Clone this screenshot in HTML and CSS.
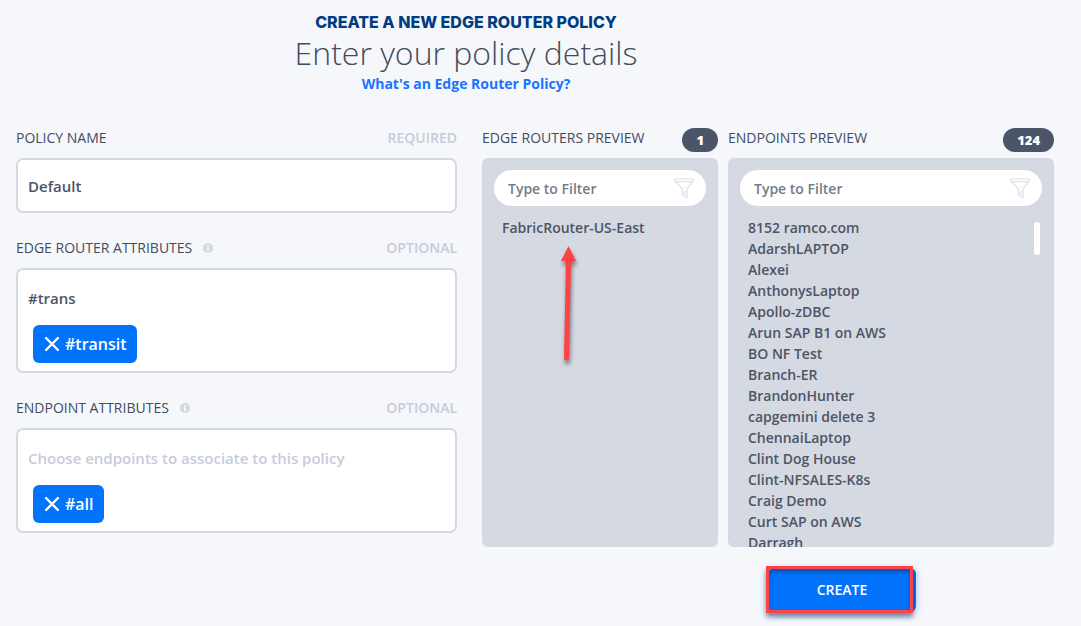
FILE: index.html
```html
<!DOCTYPE html>
<html lang="en">
<head>
<meta charset="utf-8">
<meta name="viewport" content="width=device-width, initial-scale=1">
<title>Create a new edge router policy</title>
<link rel="stylesheet" href="styles.css">
</head>
<body>
<svg class="symbols" aria-hidden="true">
  <symbol id="info" viewBox="0 0 10 10"><circle cx="5" cy="5" r="5" fill="#d3d8e1"/><path d="M4 2h2v1.400H4zM4 4.200H6V8H4z" fill="#f6f7fb"/></symbol>
  <symbol id="cross" viewBox="0 0 14 14"><path d="M1 1l12 12M13 1L1 13" fill="none" stroke="#fff" stroke-width="2.400" stroke-linecap="round"/></symbol>
  <symbol id="funnel" viewBox="0 0 20 21"><path d="M1 1h18v2.500l-6 7V20l-4.500-3v-6.500L1 3.500zM1 3.800h18M11 13v4" fill="none" stroke="#e6e6f0" stroke-width="1.600" stroke-linejoin="round"/></symbol>
</svg>
<main class="page">
  <header class="heading">
    <h1 class="heading-title">CREATE A NEW EDGE ROUTER POLICY</h1>
    <p class="heading-sub">Enter your policy details</p>
    <a class="heading-link" href="#">What's an Edge Router Policy?</a>
  </header>
  <form class="columns">
    <div class="fields">
      <section class="field">
        <div class="label-row"><label for="name">POLICY NAME</label><span class="hint">REQUIRED</span></div>
        <div class="box"><input class="entry entry-tall" id="name" type="text" value="Default"></div>
      </section>
      <section class="field">
        <div class="label-row"><label for="routers">EDGE ROUTER ATTRIBUTES</label><svg class="info"><use href="#info"/></svg><span class="hint">OPTIONAL</span></div>
        <div class="box"><input class="entry" id="routers" type="text" value="#trans">
          <button class="tag" type="button"><svg class="cross"><use href="#cross"/></svg>#transit</button></div>
      </section>
      <section class="field">
        <div class="label-row"><label for="endpoints">ENDPOINT ATTRIBUTES</label><svg class="info"><use href="#info"/></svg><span class="hint">OPTIONAL</span></div>
        <div class="box"><input class="entry" id="endpoints" type="text" placeholder="Choose endpoints to associate to this policy">
          <button class="tag" type="button"><svg class="cross"><use href="#cross"/></svg>#all</button></div>
      </section>
    </div>
    <section class="preview">
      <div class="label-row"><label for="filter-routers">EDGE ROUTERS PREVIEW</label><span class="count">1</span></div>
      <div class="panel">
        <div class="filter"><input class="filter-input" id="filter-routers" type="text" placeholder="Type to Filter"><svg class="funnel"><use href="#funnel"/></svg></div>
        <ul class="list"><li>FabricRouter-US-East</li></ul>
        <svg class="arrow" viewBox="0 0 30 130" aria-hidden="true"><path d="M14.500 113L16.500 16" stroke="#ff4245" stroke-width="5" stroke-linecap="round"/><path d="M16.500 1L24 16H9z" fill="#ff4245"/></svg>
      </div>
    </section>
    <section class="preview">
      <div class="label-row"><label for="filter-endpoints">ENDPOINTS PREVIEW</label><span class="count">124</span></div>
      <div class="panel">
        <div class="filter"><input class="filter-input" id="filter-endpoints" type="text" placeholder="Type to Filter"><svg class="funnel"><use href="#funnel"/></svg></div>
        <div class="scroller">
          <ul class="list">
            <li>8152 ramco.com</li><li>AdarshLAPTOP</li><li>Alexei</li><li>AnthonysLaptop</li><li>Apollo-zDBC</li><li>Arun SAP B1 on AWS</li><li>BO NF Test</li><li>Branch-ER</li><li>BrandonHunter</li><li>capgemini delete 3</li><li>ChennaiLaptop</li><li>Clint Dog House</li><li>Clint-NFSALES-K8s</li><li>Craig Demo</li><li>Curt SAP on AWS</li><li>Darragh</li>
          </ul>
          <span class="thumb"></span>
        </div>
      </div>
      <div class="actions"><button class="create" type="button">CREATE<span class="outline"></span></button></div>
    </section>
  </form>
</main>
</body>
</html>
```
FILE: styles.css
```css
* { box-sizing: border-box; }
body { margin: 0; background: #f6f7fb; color: #434c5e; font: 500 14px/20px "Open Sans", sans-serif; }
input, button { font: inherit; color: inherit; border: 0; outline: 0; }
.symbols { position: absolute; width: 0; height: 0; }
.page { padding: 12px 27px 10px 16px; }
.heading { display: flex; flex-direction: column; align-items: center; padding-right: 138px; }
.heading-title { margin: 0; color: #003c82; font: 800 16px/20px Inter, sans-serif; }
.heading-sub { margin: 0; font-size: 32px; font-weight: 300; line-height: 42px; }
.heading-link { color: #1a73ff; font-weight: 700; text-decoration: none; }
.columns { display: grid; grid-template-columns: minmax(0, 456fr) minmax(0, 236fr) minmax(0, 326fr); column-gap: 10px; margin-top: 34px; }
.fields { margin-right: 15px; }
.field { margin-bottom: 25px; }
.label-row { display: flex; align-items: flex-start; height: 30px; }
.info { width: 10px; height: 10px; margin: 5px 0 0 11px; }
.hint { margin-left: auto; color: #c6ccda; font-weight: 600; }
.box { display: flex; flex-direction: column; align-items: flex-start; border: 2px solid #d5d9e2; border-radius: 7px; background: #fff; }
.entry { width: 100%; height: 55px; padding: 0 10px; border-radius: 6px; background: transparent; color: #4c5566; font-size: 15px; font-weight: 600; }
.entry-tall { height: 51px; }
.entry::placeholder { color: #c6ccda; opacity: 1; }
.tag { display: flex; align-items: center; gap: 6px; height: 38px; margin: 0 0 8px 15px; padding: 0 10px 0 12px; border-radius: 6px; background: #0273fb; color: #fff; font-size: 16px; font-weight: 600; }
.cross { width: 14px; height: 14px; }
.count { margin-left: auto; height: 24px; padding: 0 14px; border-radius: 12px; background: #4b5569; color: #fff; font-size: 13px; font-weight: 800; line-height: 25px; }
.panel { position: relative; height: 389px; padding: 12px 12px 0; border-radius: 6px; background: #d5d9e1; overflow: hidden; }
.filter { display: flex; align-items: center; height: 36px; padding: 0 12px 0 14px; border-radius: 18px; background: #fff; }
.filter-input { flex: 1; min-width: 0; padding: 1px 0 0; background: transparent; font-weight: 600; }
.filter-input::placeholder { color: #757b87; opacity: 1; }
.funnel { flex: none; width: 20px; height: 21px; }
.list { flex: 1; margin: 0; padding: 11px 8px 0; list-style: none; color: #4c5566; line-height: 21px; font-weight: 600; }
.scroller { display: flex; }
.thumb { width: 6px; height: 33px; margin: 16px 2px 0 0; border-radius: 3px; background: #fff; }
.arrow { position: absolute; left: 70px; top: 87px; width: 30px; height: 130px; filter: drop-shadow(1px 4px 2px rgba(40, 50, 70, .6)); }
.actions { padding: 21px 0 0 40px; }
.create { position: relative; width: 148px; height: 44px; border-radius: 6px; background: #0273fb; color: #fff; font-weight: 600; box-shadow: 0 2px 8px rgba(2, 115, 251, .3); }
.outline { position: absolute; inset: -2px 3px -1px -2px; border: 3px solid #ff4245; box-shadow: 0 4px 5px rgba(20, 40, 70, .5), inset 0 4px 4px rgba(0, 40, 90, .35); }
```
